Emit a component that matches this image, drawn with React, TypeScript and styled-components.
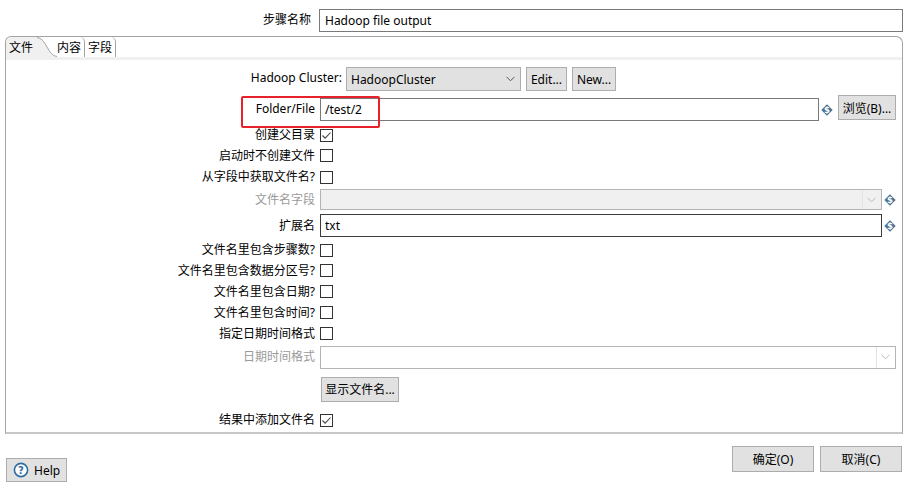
import React from "react";
import styled, { createGlobalStyle } from "styled-components";

const GlobalStyle = createGlobalStyle`
  html, body {
    margin: 0;
    padding: 0;
    background: #ffffff;
  }
  body {
    font-family: "Noto Sans", "Noto Sans CJK SC", sans-serif;
    font-size: 12px;
    color: #000000;
  }
`;

const Page = styled.div`
  width: 908px;
  height: 489px;
  display: flex;
  flex-direction: column;
  box-sizing: border-box;
  padding-top: 9px;
`;

const StepRow = styled.div`
  display: flex;
  align-items: center;
  height: 23px;
  margin-bottom: 4px;
`;

const StepLabel = styled.div`
  width: 311px;
  text-align: right;
  margin-top: -3px;
`;

const TextField = styled.div<{ $dark?: boolean }>`
  flex: 1;
  height: 23px;
  box-sizing: border-box;
  border: 1px solid ${(p) => (p.$dark ? "#3c3c3c" : "#7a7a7a")};
  background: #ffffff;
  display: flex;
  align-items: center;
  padding-left: 4px;
  white-space: nowrap;
`;

const StepField = styled(TextField)`
  flex: none;
  width: 584px;
  margin-left: 8px;
  padding-left: 5px;
`;

const Folder = styled.div`
  margin-left: 5px;
  width: 898px;
  height: 398px;
  box-sizing: border-box;
  border: 1px solid #a3a3a3;
  border-bottom: 2px solid #c8c8c8;
  border-radius: 6px 7px 0 0;
  display: flex;
  flex-direction: column;
  overflow: hidden;
`;

const TabBar = styled.div`
  display: flex;
  height: 20px;
  align-items: stretch;
`;

const ActiveTab = styled.div`
  background: #f0f0f0;
  padding: 0 4px 0 3px;
  display: flex;
  align-items: center;
  border-top-left-radius: 6px;
  width: 24px;
`;

const TabCurve = styled.svg`
  width: 20px;
  height: 20px;
  display: block;
  flex: none;
`;

const Tab = styled.div<{ $first?: boolean }>`
  display: flex;
  align-items: center;
  padding: 0 3px 0 ${(p) => (p.$first ? "0" : "3px")};
  border-right: 1px solid #a3a3a3;
  border-top-right-radius: 5px;
`;

const TabBand = styled.div`
  height: 3px;
  background: #f0f0f0;
`;

const Content = styled.div`
  flex: 1;
  padding: 4px 6px 0 0;
  display: flex;
  flex-direction: column;
`;

const Row = styled.div<{ $h: number }>`
  position: relative;
  display: grid;
  grid-template-columns: 309px 1fr;
  column-gap: 5px;
  align-items: center;
  height: ${(p) => p.$h}px;
`;

const Label = styled.div<{ $disabled?: boolean }>`
  text-align: right;
  white-space: nowrap;
  color: ${(p) => (p.$disabled ? "#9a9a9a" : "#000000")};
  margin-top: -2px;
`;

const Controls = styled.div`
  display: flex;
  align-items: center;
`;

const ClusterRow = styled.div`
  display: flex;
  align-items: center;
  height: 30px;
`;

const ClusterLabel = styled.div`
  width: 336px;
  text-align: right;
  margin-right: 4px;
  margin-top: -3px;
`;

const Combo = styled.div<{ $w?: number; $disabled?: boolean; $h?: number }>`
  ${(p) => (p.$w ? `width: ${p.$w}px; flex: none;` : "flex: 1;")}
  height: ${(p) => p.$h ?? 22}px;
  box-sizing: border-box;
  border: 1px solid ${(p) => (p.$disabled ? "#b4b4b4" : "#adadad")};
  background: ${(p) => (p.$disabled ? "#f0f0f0" : "#e1e1e1")};
  display: flex;
  align-items: center;
  padding-left: 4px;
`;

const ComboText = styled.span`
  flex: 1;
`;

const ComboArrow = styled.div<{ $disabled?: boolean }>`
  width: 16px;
  height: 100%;
  display: flex;
  align-items: center;
  justify-content: center;
  border-left: 1px solid ${(p) => (p.$disabled ? "#e3e3e3" : "transparent")};
  margin-right: 2px;
`;

const Button = styled.button<{ $w: number; $h?: number }>`
  width: ${(p) => p.$w}px;
  height: ${(p) => p.$h ?? 24}px;
  box-sizing: border-box;
  border: 1px solid #adadad;
  background: #e1e1e1;
  font-family: inherit;
  font-size: 12px;
  color: #000000;
  padding: 0;
  display: flex;
  align-items: center;
  justify-content: center;
  gap: 5px;
  flex: none;
`;

const VarIcon = styled.svg<{ $ml?: number; $mr?: number }>`
  width: 12px;
  height: 12px;
  flex: none;
  margin-left: ${(p) => p.$ml ?? 2}px;
  margin-right: ${(p) => p.$mr ?? 0}px;
`;

const Box = styled.div`
  width: 13px;
  height: 13px;
  box-sizing: border-box;
  border: 1px solid #333333;
  background: #ffffff;
  display: flex;
  align-items: center;
  justify-content: center;
`;

const Highlight = styled.div`
  position: absolute;
  left: 235px;
  top: 2px;
  width: 139px;
  height: 32px;
  box-sizing: border-box;
  border: 2px solid #e8222a;
  border-radius: 2px;
  pointer-events: none;
`;

const Footer = styled.div`
  display: flex;
  align-items: flex-start;
  padding: 12px 6px 0 6px;
`;

const HelpButton = styled(Button)`
  margin-top: 12px;
  justify-content: flex-start;
  padding-left: 6px;
`;

const Spacer = styled.div`
  flex: 1;
`;

const DialogButtons = styled.div`
  display: flex;
  gap: 6px;
`;

const Chevron = ({ disabled }: { disabled?: boolean }) => (
  <svg width="9" height="6" viewBox="0 0 9 6">
    <path
      d="M0.5 0.8 L4.5 4.8 L8.5 0.8"
      fill="none"
      stroke={disabled ? "#b8b8b8" : "#555555"}
      strokeWidth="1"
    />
  </svg>
);

const Dollar = ({ ml, mr }: { ml?: number; mr?: number }) => (
  <VarIcon viewBox="0 0 12 12" $ml={ml} $mr={mr}>
    <path d="M6 0.3 L11.7 6 L6 11.7 L0.3 6 Z" fill="#4c7394" />
    <text
      x="6"
      y="9"
      textAnchor="middle"
      fontSize="8.5"
      fontWeight="bold"
      fill="#ffffff"
      fontFamily="DejaVu Sans, sans-serif"
    >
      $
    </text>
  </VarIcon>
);

const Check = ({ checked }: { checked?: boolean }) => (
  <Box>
    {checked && (
      <svg width="11" height="11" viewBox="0 0 11 11">
        <path d="M1.5 5.5 L4.2 8.2 L9.5 2.5" fill="none" stroke="#444444" strokeWidth="1.1" />
      </svg>
    )}
  </Box>
);

const CheckRow = ({ h, label, checked }: { h: number; label: string; checked?: boolean }) => (
  <Row $h={h}>
    <Label>{label}</Label>
    <Controls>
      <Check checked={checked} />
    </Controls>
  </Row>
);

const HelpIcon = () => (
  <svg width="16" height="16" viewBox="0 0 16 16">
    <circle cx="8" cy="8" r="6.6" fill="#ffffff" stroke="#2f6c9f" strokeWidth="1.6" />
    <text
      x="8"
      y="11.6"
      textAnchor="middle"
      fontSize="10"
      fontWeight="bold"
      fill="#2f6c9f"
      fontFamily="DejaVu Sans, sans-serif"
    >
      ?
    </text>
  </svg>
);

export default function App() {
  return (
    <>
      <GlobalStyle />
      <Page>
        <StepRow>
          <StepLabel>步骤名称</StepLabel>
          <StepField>Hadoop file output</StepField>
        </StepRow>

        <Folder>
          <TabBar>
            <ActiveTab>文件</ActiveTab>
            <TabCurve viewBox="0 0 20 20">
              <path d="M0 0 C9 0 11 20 20 20 L0 20 Z" fill="#f0f0f0" />
              <path d="M0 0.5 C9 0.5 11 19.5 20 19.5" fill="none" stroke="#a3a3a3" />
            </TabCurve>
            <Tab $first>内容</Tab>
            <Tab>字段</Tab>
          </TabBar>
          <TabBand />

          <Content>
            <ClusterRow>
              <ClusterLabel>Hadoop Cluster:</ClusterLabel>
              <Combo $w={175} $h={24}>
                <ComboText>HadoopCluster</ComboText>
                <ComboArrow>
                  <Chevron />
                </ComboArrow>
              </Combo>
              <Button $w={41} style={{ marginLeft: 5 }}>Edit...</Button>
              <Button $w={44} style={{ marginLeft: 5 }}>New...</Button>
            </ClusterRow>

            <Row $h={31}>
              <Label>Folder/File</Label>
              <Controls>
                <TextField>/test/2</TextField>
                <Dollar ml={2} mr={5} />
                <Button $w={58} $h={25} style={{ marginTop: -4 }}>浏览(B)...</Button>
              </Controls>
              <Highlight />
            </Row>

            <CheckRow h={20} label="创建父目录" checked />
            <CheckRow h={21} label="启动时不创建文件" />
            <CheckRow h={22} label="从字段中获取文件名?" />

            <Row $h={23}>
              <Label $disabled>文件名字段</Label>
              <Controls>
                <Combo $disabled $h={21}>
                  <ComboText />
                  <ComboArrow $disabled>
                    <Chevron disabled />
                  </ComboArrow>
                </Combo>
                <Dollar ml={2} />
              </Controls>
            </Row>

            <Row $h={29}>
              <Label>扩展名</Label>
              <Controls>
                <TextField $dark>txt</TextField>
                <Dollar ml={2} />
              </Controls>
            </Row>

            <CheckRow h={20} label="文件名里包含步骤数?" />
            <CheckRow h={21} label="文件名里包含数据分区号?" />
            <CheckRow h={21} label="文件名里包含日期?" />
            <CheckRow h={21} label="文件名里包含时间?" />
            <CheckRow h={21} label="指定日期时间格式" />

            <Row $h={26}>
              <Label $disabled>日期时间格式</Label>
              <Controls>
                <Combo $disabled $h={23} style={{ background: "#ffffff" }}>
                  <ComboText />
                  <ComboArrow $disabled>
                    <Chevron disabled />
                  </ComboArrow>
                </Combo>
              </Controls>
            </Row>

            <Row $h={38}>
              <div />
              <Controls>
                <Button $w={78} $h={25} style={{ marginLeft: 1 }}>显示文件名...</Button>
              </Controls>
            </Row>

            <CheckRow h={24} label="结果中添加文件名" checked />
          </Content>
        </Folder>

        <Footer>
          <HelpButton $w={61} $h={24}>
            <HelpIcon />
            Help
          </HelpButton>
          <Spacer />
          <DialogButtons>
            <Button $w={82} $h={26}>确定(O)</Button>
            <Button $w={82} $h={26}>取消(C)</Button>
          </DialogButtons>
        </Footer>
      </Page>
    </>
  );
}
